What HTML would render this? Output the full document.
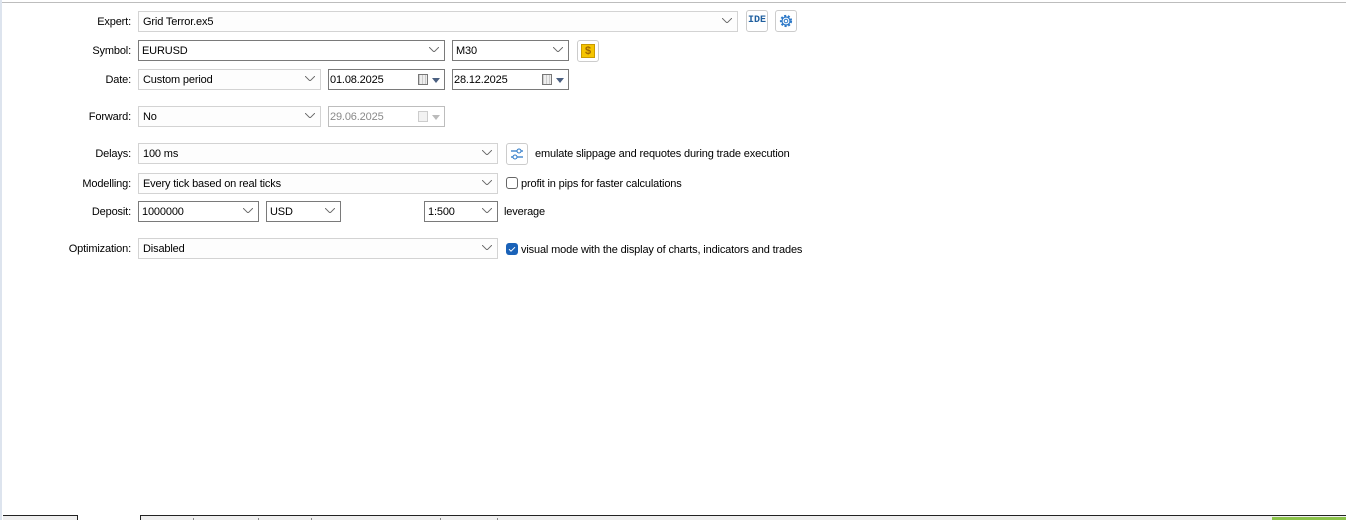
<!DOCTYPE html>
<html><head><meta charset="utf-8"><style>
*{box-sizing:border-box;margin:0;padding:0}
body{width:1346px;height:520px;background:#fff;position:relative;overflow:hidden;font-family:"Liberation Sans",sans-serif;font-size:11px;letter-spacing:-0.15px;color:#000}
.a{position:absolute}
.lbl{position:absolute;right:1215px;text-align:right;white-space:nowrap}
.box{position:absolute;height:21px;border:1px solid #d3d3d3;background:#fdfdfd;padding:4px 0 0 4px;white-space:nowrap}
.box.w{border-color:#7a7a7a;background:#fff;padding-left:3px}
.box.dis{border-color:#bdbdbd;color:#8a8a8a;background:#fff}
.chev{position:absolute;right:5px;top:6px;width:10px;height:6px}
.chev::before{content:"";position:absolute;left:0;top:0;width:10px;height:5px;background:linear-gradient(to bottom left,transparent 44%,#777 44%,#777 58%,transparent 58%) left/5px 5px no-repeat,linear-gradient(to bottom right,transparent 44%,#777 44%,#777 58%,transparent 58%) right/5px 5px no-repeat}
.cal{position:absolute;right:16px;top:4px;width:10px;height:11px;border:1px solid #777;background:repeating-linear-gradient(90deg,#ccc 0 1px,#eee 1px 3px)}
.tri{position:absolute;right:4px;top:8px;border-left:4px solid transparent;border-right:4px solid transparent;border-top:5px solid #4a5f80}
.dis .cal{border-color:#ccc;background:#f2f2f2}.dis .tri{border-top-color:#bbb}
.btn{position:absolute;width:22px;height:22px;border:1px solid #ccc;border-radius:3px;background:#fff}
.txt{position:absolute;white-space:nowrap}
</style></head><body>
<div class="a" style="left:0;top:2px;width:1346px;height:1px;background:#bdbdbd"></div>
<div class="a" style="left:0;top:0;width:2px;height:520px;background:#dde4ee"></div>

<div class="lbl" style="top:16px">Expert:</div>
<div class="box" style="left:138px;top:11px;width:600px">Grid Terror.ex5<div class="chev"></div></div>
<div class="btn" style="left:746px;top:10px;font-size:10px;font-weight:bold;color:#1f5f9f;text-align:center;line-height:20px;font-family:'Liberation Mono',monospace;letter-spacing:0">IDE</div>
<div class="btn" style="left:775px;top:10px"><svg width="20" height="20" viewBox="0 0 20 20"><circle cx="10" cy="10" r="5" fill="none" stroke="#2b78c8" stroke-width="2.2" stroke-dasharray="2 1.6"/><circle cx="10" cy="10" r="4" fill="none" stroke="#2b78c8" stroke-width="1.2"/><circle cx="10" cy="10" r="1.8" fill="none" stroke="#2b78c8" stroke-width="1"/></svg></div>

<div class="lbl" style="top:45px">Symbol:</div>
<div class="box w" style="left:138px;top:40px;width:307px">EURUSD<div class="chev"></div></div>
<div class="box w" style="left:452px;top:40px;width:117px">M30<div class="chev"></div></div>
<div class="btn" style="left:577px;top:40px"><div class="a" style="left:3px;top:3px;width:14px;height:14px;background:#f5c400;border:1px solid #c99a00;color:#a06800;font-size:11px;font-weight:bold;text-align:center;line-height:13px">$</div></div>

<div class="lbl" style="top:74px">Date:</div>
<div class="box" style="left:138px;top:69px;width:183px">Custom period<div class="chev"></div></div>
<div class="box w" style="left:328px;top:69px;width:117px;padding-left:1px">01.08.2025<div class="cal"></div><div class="tri"></div></div>
<div class="box w" style="left:452px;top:69px;width:117px;padding-left:1px">28.12.2025<div class="cal"></div><div class="tri"></div></div>

<div class="lbl" style="top:111px">Forward:</div>
<div class="box" style="left:138px;top:106px;width:183px">No<div class="chev"></div></div>
<div class="box dis" style="left:328px;top:106px;width:117px;padding-left:1px">29.06.2025<div class="cal"></div><div class="tri"></div></div>

<div class="lbl" style="top:148px">Delays:</div>
<div class="box" style="left:138px;top:143px;width:360px">100 ms<div class="chev"></div></div>
<div class="btn" style="left:506px;top:143px"><svg width="20" height="20" viewBox="0 0 20 20"><path d="M4 7h12M4 13h12" stroke="#2b78c8" stroke-width="1.2"/><circle cx="12" cy="7" r="2" fill="#fff" stroke="#2b78c8"/><circle cx="8" cy="13" r="2" fill="#fff" stroke="#2b78c8"/></svg></div>
<div class="txt" style="left:535px;top:148px">emulate slippage and requotes during trade execution</div>

<div class="lbl" style="top:178px">Modelling:</div>
<div class="box" style="left:138px;top:173px;width:360px">Every tick based on real ticks<div class="chev"></div></div>
<div class="a" style="left:506px;top:177px;width:12px;height:12px;border:1px solid #666;border-radius:3px"></div>
<div class="txt" style="left:521px;top:178px">profit in pips for faster calculations</div>

<div class="lbl" style="top:206px">Deposit:</div>
<div class="box w" style="left:138px;top:201px;width:121px">1000000<div class="chev"></div></div>
<div class="box w" style="left:266px;top:201px;width:75px">USD<div class="chev"></div></div>
<div class="box w" style="left:424px;top:201px;width:74px">1:500<div class="chev"></div></div>
<div class="txt" style="left:504px;top:206px">leverage</div>

<div class="lbl" style="top:243px">Optimization:</div>
<div class="box" style="left:138px;top:238px;width:360px">Disabled<div class="chev"></div></div>
<div class="a" style="left:506px;top:243px;width:12px;height:12px;background:#1a62b8;border-radius:3px"><svg width="12" height="12" viewBox="0 0 12 12" style="position:absolute;left:0;top:0"><path d="M3 6.2l2 2 4-4" fill="none" stroke="#fff" stroke-width="1"/></svg></div>
<div class="txt" style="left:521px;top:244px">visual mode with the display of charts, indicators and trades</div>

<div class="a" style="left:3px;top:515px;width:75px;height:5px;border-top:1px solid #222;border-right:1px solid #222;background:#efefef"></div>
<div class="a" style="left:140px;top:515px;width:1206px;height:5px;border-top:1px solid #222;border-left:1px solid #222;background:#efefef"></div>
<div class="a" style="left:193px;top:518px;width:1px;height:2px;background:#888"></div>
<div class="a" style="left:258px;top:518px;width:1px;height:2px;background:#888"></div>
<div class="a" style="left:311px;top:518px;width:1px;height:2px;background:#888"></div>
<div class="a" style="left:440px;top:518px;width:1px;height:2px;background:#888"></div>
<div class="a" style="left:497px;top:518px;width:1px;height:2px;background:#888"></div>
<div class="a" style="left:1272px;top:517px;width:74px;height:3px;background:#8bc34a"></div>
</body></html>
